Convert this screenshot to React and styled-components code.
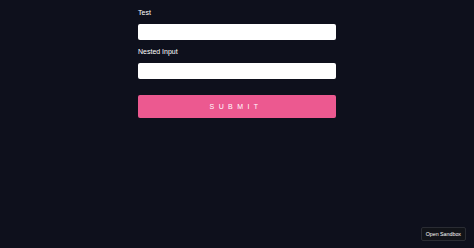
import React from 'react';
import styled, { createGlobalStyle } from 'styled-components';

const Global = createGlobalStyle`
  html, body {
    margin: 0;
    padding: 0;
    background: #0e101c;
    font-family: "Liberation Sans", Arial, sans-serif;
  }
  #root {
    min-height: 248px;
  }
`;

const Page = styled.div`
  position: relative;
  height: 248px;
  background: #0e101c;
  color: #fff;
`;

const Form = styled.form`
  width: 198px;
  margin: 0 auto;
  padding-top: 9px;
  display: flex;
  flex-direction: column;
`;

const Label = styled.label`
  display: block;
  font-size: 7px;
  line-height: 8px;
  color: #fff;
  margin-bottom: 7px;
`;

const Input = styled.input`
  box-sizing: border-box;
  display: block;
  width: 100%;
  height: 16px;
  border: none;
  border-radius: 2px;
  background: #fff;
  margin-bottom: 8px;
  padding: 0 5px;
`;

const Submit = styled.button`
  box-sizing: border-box;
  margin-top: 8px;
  height: 23px;
  width: 100%;
  border: none;
  border-radius: 2px;
  background: #ec5990;
  color: #fff;
  font-family: "Liberation Sans", Arial, sans-serif;
  font-size: 7px;
  letter-spacing: 4.4px;
  text-transform: uppercase;
  padding-left: 4px;
`;

const SandboxButton = styled.button`
  position: absolute;
  right: 8px;
  bottom: 7px;
  height: 14px;
  padding: 0 4px;
  background: #111318;
  border: 1px solid #2a2c33;
  border-radius: 2px;
  color: #fff;
  font-family: "Liberation Sans", Arial, sans-serif;
  font-size: 5.3px;
`;

export default function App() {
  return (
    <Page>
      <Global />
      <Form onSubmit={(e) => e.preventDefault()}>
        <Label htmlFor="test">Test</Label>
        <Input id="test" name="test" />
        <Label htmlFor="nested">Nested Input</Label>
        <Input id="nested" name="nested" />
        <Submit type="submit">Submit</Submit>
      </Form>
      <SandboxButton type="button">Open Sandbox</SandboxButton>
    </Page>
  );
}
